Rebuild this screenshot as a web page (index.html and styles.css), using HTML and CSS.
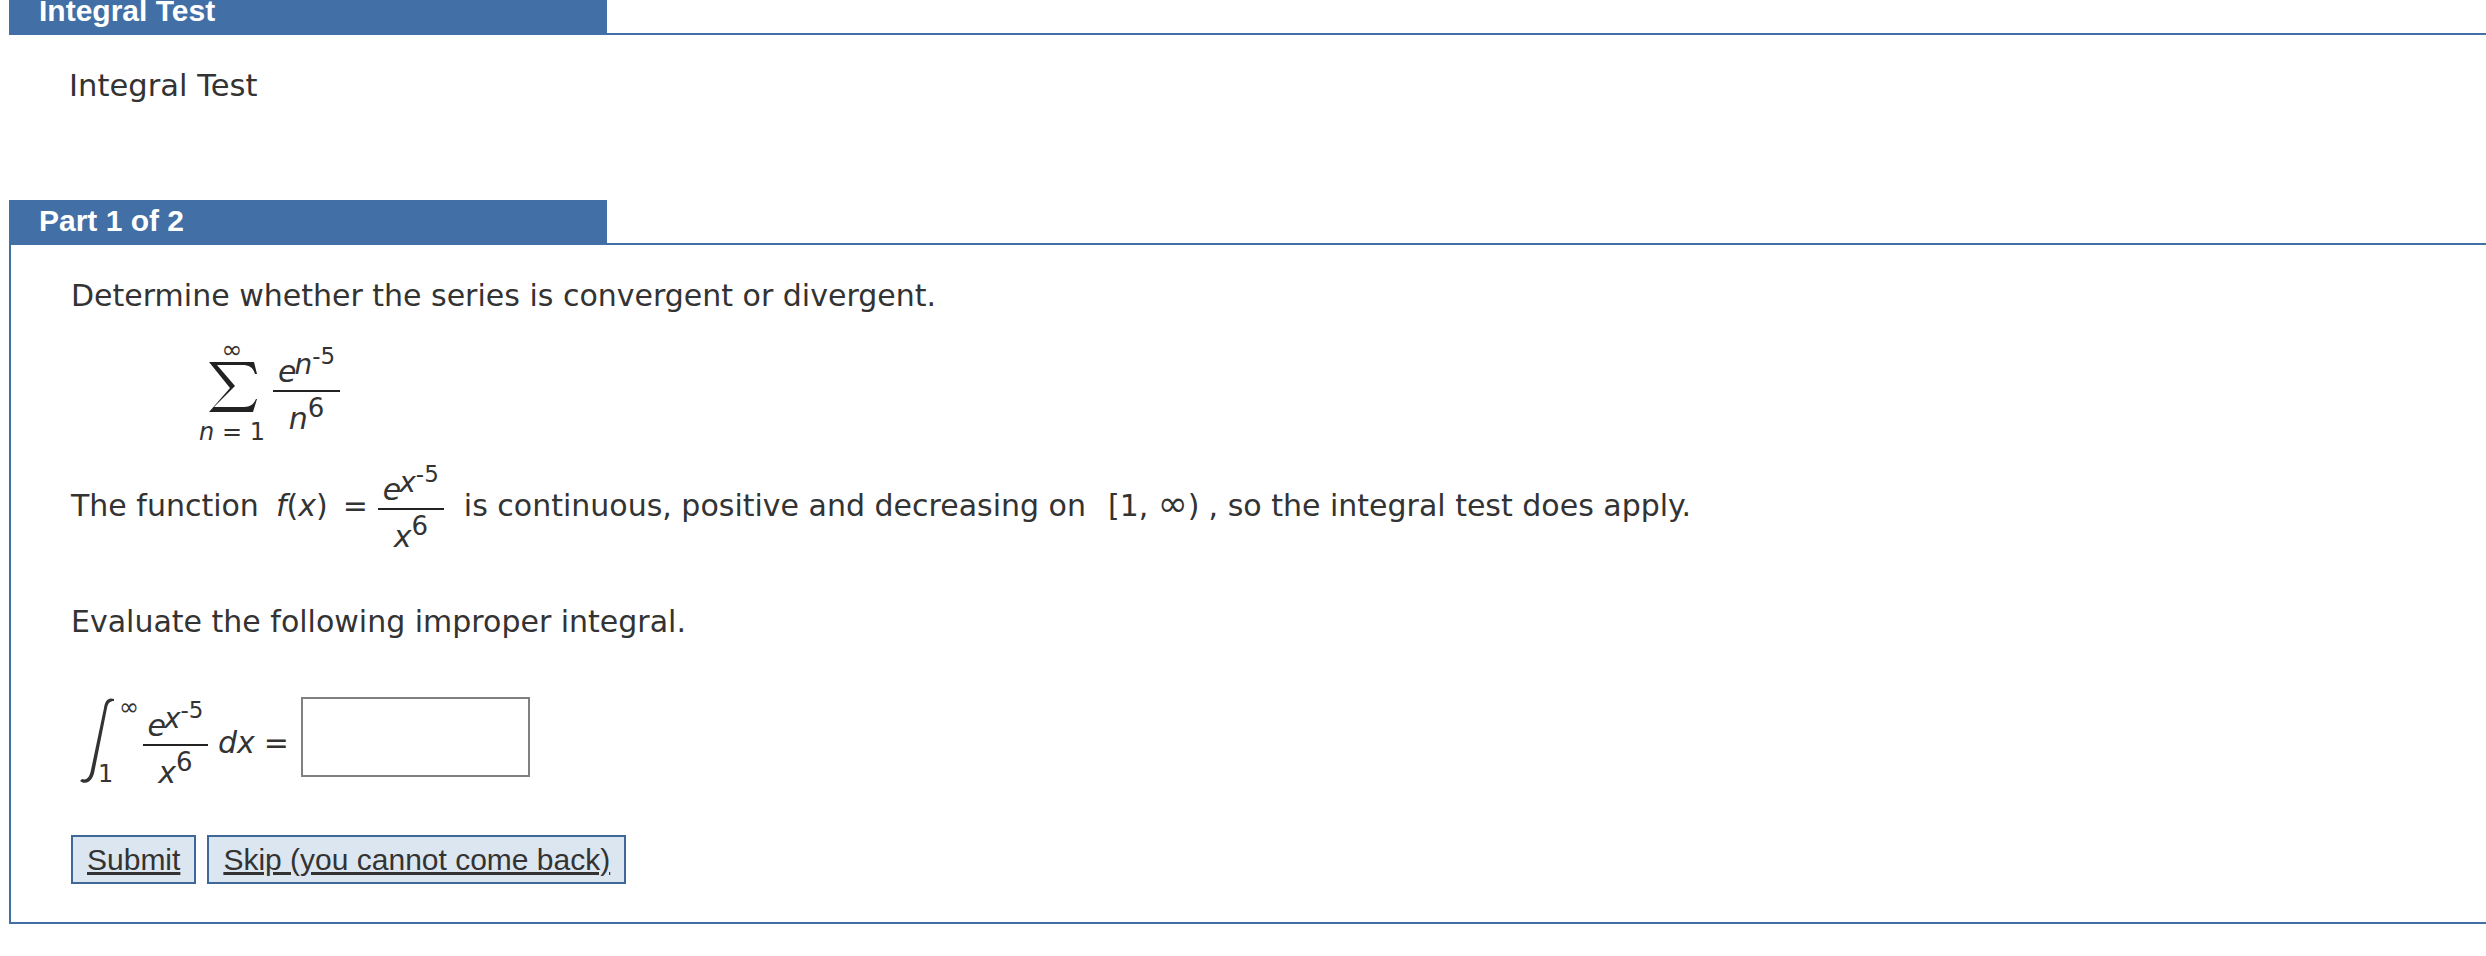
FILE: index.html
```html
<!DOCTYPE html>
<html lang="en">
<head>
<meta charset="utf-8">
<title>Integral Test</title>
<link rel="stylesheet" href="styles.css">
</head>
<body>
<div class="page">
  <div class="head"><div class="tab">Integral Test</div></div>
  <div class="intro">Integral Test</div>

  <div class="head"><div class="tab">Part 1 of 2</div></div>
  <div class="panel">
    <p class="text first">Determine whether the series is convergent or divergent.</p>

    <div class="row row-sum">
      <div class="sum">
        <span class="limit">∞</span>
        <svg class="sigma" viewBox="0 0 49 50" aria-hidden="true"><path d="M1 0H46L49 12H47C45 5 41 3 34 3H9L27 24L6 45H36C42 45 46 42 48 37H49L45 50H1L22 26Z"/></svg>
        <span class="lower"><i>n</i> = 1</span>
      </div>
      <div class="frac frac-sum">
        <div class="num"><i>e</i><sup class="s1"><i>n</i><sup class="s2">-5</sup></sup></div>
        <div class="den"><i>n</i><sup class="s3">6</sup></div>
      </div>
    </div>

    <div class="row row-fn">
      <span class="t-fn">The function</span>
      <span class="m-fn"><i>f</i>(<i>x</i>)</span>
      <span class="m-eq">=</span>
      <div class="frac frac-fn">
        <div class="num"><i>e</i><sup class="s1"><i>x</i><sup class="s2">-5</sup></sup></div>
        <div class="den"><i>x</i><sup class="s3">6</sup></div>
      </div>
      <span class="t-cont">is continuous, positive and decreasing on</span>
      <span class="m-int">[1, <span class="inf">∞</span>)</span>
      <span class="t-end">, so the integral test does apply.</span>
    </div>

    <p class="text eval">Evaluate the following improper integral.</p>

    <div class="row row-int">
      <svg class="integral" viewBox="0 0 36 86" aria-hidden="true"><path d="M35 1C29-1 26 3 25 10L12 72C11 78 8 83 3 81L1 83C8 88 14 82 15.5 73L28 10C29 5 31 3 35 3Z"/></svg>
      <div class="bounds"><span class="upper">∞</span><span class="under">1</span></div>
      <div class="frac frac-int">
        <div class="num"><i>e</i><sup class="s1"><i>x</i><sup class="s2">-5</sup></sup></div>
        <div class="den"><i>x</i><sup class="s3">6</sup></div>
      </div>
      <span class="m-dx"><i>dx</i></span>
      <span class="m-eq2">=</span>
      <input class="answer" type="text" aria-label="Answer">
    </div>

    <div class="actions">
      <button class="btn" type="button">Submit</button>
      <button class="btn" type="button">Skip (you cannot come back)</button>
    </div>
  </div>
</div>
</body>
</html>
```
FILE: styles.css
```css
* { box-sizing: border-box; }
html, body { margin: 0; padding: 0; background: #fff; overflow: hidden; }
body { height: 956px; }
.page {
  margin-top: -10px;
  padding-left: 9px;
  color: #333;
  font-family: "DejaVu Sans", Verdana, sans-serif;
  font-size: 30px;
}
.head { height: 45px; border-bottom: 2px solid #416fa6; }
.tab {
  width: 598px;
  height: 45px;
  padding-left: 30px;
  background: #416fa6;
  color: #fff;
  font: bold 30px/42px "Liberation Sans", Arial, sans-serif;
}
.intro { height: 165px; padding: 31px 0 0 60px; line-height: 40px; font-size: 30.6px; }
.panel {
  height: 679px;
  padding: 0 0 37px 60px;
  border-left: 2px solid #416fa6;
  border-bottom: 2px solid #416fa6;
}
.text { margin: 0; line-height: 40px; }
.first { padding-top: 31px; }
.eval { margin-top: 39px; }
.row { display: flex; align-items: center; }
.row-sum { margin: 15px 0 0 129px; align-items: flex-start; height: 114px; }
.row-fn { margin: 4px 0 0 0; height: 114px; line-height: 40px; white-space: pre; }
.row-int { margin: 43px 0 0 8px; height: 114px; }
.frac { display: flex; flex-direction: column; align-items: center; }
.num { height: 61px; padding-top: 23px; border-bottom: 2px solid #222; line-height: 36px; text-align: center; white-space: nowrap; }
.den { height: 53px; line-height: 53px; text-align: center; white-space: nowrap; }
.num, .den { width: 100%; }
sup { line-height: 0; }
.s1 { font-size: 28px; vertical-align: 8px; margin-left: -2px; }
.s2 { font-size: 23px; vertical-align: 10px; }
.s3 { font-size: 26px; vertical-align: 12px; }
.sum { display: flex; flex-direction: column; align-items: center; width: 64px; margin-top: 9px; }
.limit { font-size: 25px; line-height: 20px; }
.sigma { width: 49px; height: 50px; margin-top: 2px; fill: #222; }
.lower { font-size: 24px; line-height: 40px; white-space: nowrap; }
.frac-sum { width: 67px; margin-left: 9px; }
.m-fn { margin-left: 17px; }
.m-eq { margin-left: 15px; }
.frac-fn { width: 66px; margin-left: 10px; }
.t-cont { margin-left: 20px; }
.m-int { margin-left: 22px; }
.inf { font-size: 36px; line-height: 0; }
.t-end { margin-left: 9px; }
.integral { width: 36px; height: 86px; fill: #333; margin-top: -2px; }
.bounds { display: flex; flex-direction: column; justify-content: space-between; align-items: flex-start; width: 28px; height: 87px; margin-top: -3px; font-size: 24px; line-height: 20px; margin-left: -16px; }
.upper { margin-left: 20px; }
.under { margin-left: -1px; }
.frac-int { width: 65px; margin-left: 16px; }
.m-dx { margin-left: 10px; }
.m-eq2 { margin-left: 9px; }
.answer { width: 229px; height: 80px; margin: 0 0 10px 12px; padding: 0; border: 2px solid #808080; background: #fff; }
.actions { display: flex; gap: 11px; margin-top: 36px; }
.btn {
  height: 49px;
  padding: 0 14px;
  border: 2px solid #3d6899;
  border-radius: 0;
  background: #dce6f0;
  color: #333;
  font: 30px "Liberation Sans", Arial, sans-serif;
  text-decoration: underline;
}
```
